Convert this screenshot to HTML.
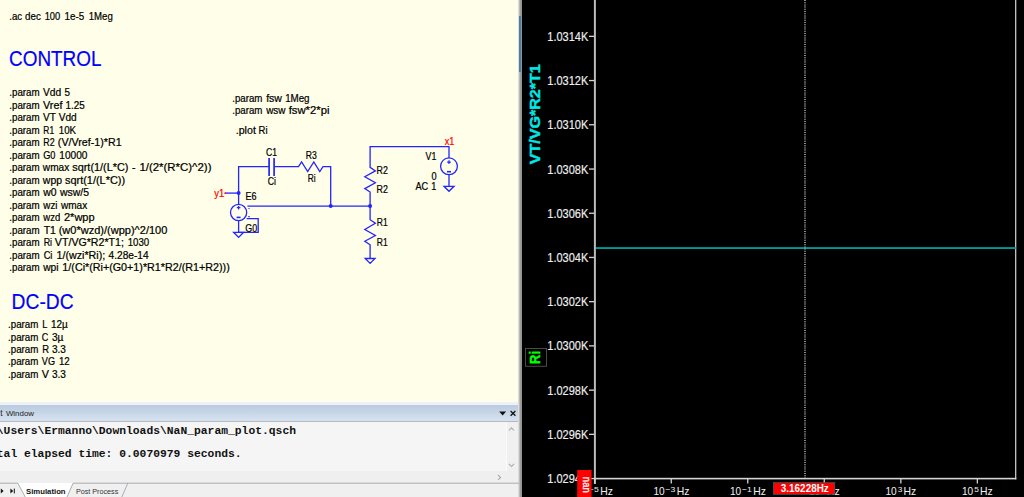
<!DOCTYPE html>
<html><head><meta charset="utf-8"><title>Qspice</title>
<style>
html,body{margin:0;padding:0;}
body{width:1024px;height:497px;overflow:hidden;background:#000;font-family:"Liberation Sans",sans-serif;position:relative;}
.abs{position:absolute;}
#sch{left:0;top:0;width:519px;height:401.7px;background:#ffffe9;}
#band{left:0;top:401.7px;width:519px;height:3.3px;background:#eef1fa;}
#title{left:0;top:405px;width:519px;height:16.8px;background:linear-gradient(#b9cbde,#d6e2f0);border-bottom:1px solid #b5b9c0;box-sizing:border-box;}
#outtxt{left:0;top:421.8px;width:505.5px;height:49px;background:#f5f5f5;border-right:1px solid #fbfbfb;border-bottom:1px solid #fbfbfb;}
#vscroll{left:506.5px;top:421.8px;width:12px;height:49.5px;background:#f0f0f0;}
#hscroll{left:0;top:471.3px;width:519px;height:11.7px;background:#efefef;}
#tabs{left:0;top:483px;width:519px;height:14px;background:#f0f0f0;}
#split{left:517.8px;top:0;width:4.3px;height:497px;background:linear-gradient(90deg,#e4e4dc 0,#d4d4d2 1.3px,#a2a2a2 1.7px,#949494 3.6px,#7a7a7a 4.3px);}
#splitblue{left:519.4px;top:16px;width:2px;height:56px;background:#4b7ca6;}
#plot{left:522.1px;top:0;width:501.9px;height:497px;background:#000;}
svg{position:absolute;left:0;top:0;font-family:"Liberation Sans",sans-serif;}
</style></head>
<body>
<div class="abs" id="sch"></div>
<div class="abs" id="band"></div>
<div class="abs" id="title"></div>
<div class="abs" id="outtxt"></div>
<div class="abs" id="vscroll"></div>
<div class="abs" id="hscroll"></div>
<div class="abs" id="tabs"></div>
<div class="abs" id="split"></div>
<div class="abs" id="splitblue"></div>
<div class="abs" id="plot"></div>
<svg width="1024" height="497" viewBox="0 0 1024 497">
<g id="schematic">
<text x="9" y="66.2" font-size="22.2" fill="#0000ff" textLength="92.5" lengthAdjust="spacingAndGlyphs" stroke="#0000ff" stroke-width="0.22" word-spacing="0.6">CONTROL</text>
<text x="9.25" y="96.1" font-size="10.3" fill="#000" textLength="30.4" lengthAdjust="spacingAndGlyphs" stroke="#000" stroke-width="0.22" word-spacing="0.6">.param</text>
<text x="43.05" y="96.1" font-size="10.3" fill="#000" textLength="18.2" lengthAdjust="spacingAndGlyphs" stroke="#000" stroke-width="0.22" word-spacing="0.6">Vdd</text>
<text x="64.45" y="96.1" font-size="10.3" fill="#000" textLength="5.5" lengthAdjust="spacingAndGlyphs" stroke="#000" stroke-width="0.22" word-spacing="0.6">5</text>
<text x="9.25" y="108.6" font-size="10.3" fill="#000" textLength="30.4" lengthAdjust="spacingAndGlyphs" stroke="#000" stroke-width="0.22" word-spacing="0.6">.param</text>
<text x="43.05" y="108.6" font-size="10.3" fill="#000" textLength="19.4" lengthAdjust="spacingAndGlyphs" stroke="#000" stroke-width="0.22" word-spacing="0.6">Vref</text>
<text x="65.55" y="108.6" font-size="10.3" fill="#000" textLength="19.2" lengthAdjust="spacingAndGlyphs" stroke="#000" stroke-width="0.22" word-spacing="0.6">1.25</text>
<text x="9.25" y="121.1" font-size="10.3" fill="#000" textLength="30.4" lengthAdjust="spacingAndGlyphs" stroke="#000" stroke-width="0.22" word-spacing="0.6">.param</text>
<text x="43.05" y="121.1" font-size="10.3" fill="#000" textLength="12.9" lengthAdjust="spacingAndGlyphs" stroke="#000" stroke-width="0.22" word-spacing="0.6">VT</text>
<text x="58.75" y="121.1" font-size="10.3" fill="#000" textLength="18.0" lengthAdjust="spacingAndGlyphs" stroke="#000" stroke-width="0.22" word-spacing="0.6">Vdd</text>
<text x="9.25" y="133.6" font-size="10.3" fill="#000" textLength="30.4" lengthAdjust="spacingAndGlyphs" stroke="#000" stroke-width="0.22" word-spacing="0.6">.param</text>
<text x="43.35" y="133.6" font-size="10.3" fill="#000" textLength="10.7" lengthAdjust="spacingAndGlyphs" stroke="#000" stroke-width="0.22" word-spacing="0.6">R1</text>
<text x="58.75" y="133.6" font-size="10.3" fill="#000" textLength="17.4" lengthAdjust="spacingAndGlyphs" stroke="#000" stroke-width="0.22" word-spacing="0.6">10K</text>
<text x="9.25" y="146.1" font-size="10.3" fill="#000" textLength="30.4" lengthAdjust="spacingAndGlyphs" stroke="#000" stroke-width="0.22" word-spacing="0.6">.param</text>
<text x="43.35" y="146.1" font-size="10.3" fill="#000" textLength="11.3" lengthAdjust="spacingAndGlyphs" stroke="#000" stroke-width="0.22" word-spacing="0.6">R2</text>
<text x="57.85" y="146.1" font-size="10.3" fill="#000" textLength="63.9" lengthAdjust="spacingAndGlyphs" stroke="#000" stroke-width="0.22" word-spacing="0.6">(V/Vref-1)*R1</text>
<text x="9.25" y="158.6" font-size="10.3" fill="#000" textLength="30.4" lengthAdjust="spacingAndGlyphs" stroke="#000" stroke-width="0.22" word-spacing="0.6">.param</text>
<text x="43.15" y="158.6" font-size="10.3" fill="#000" textLength="12.3" lengthAdjust="spacingAndGlyphs" stroke="#000" stroke-width="0.22" word-spacing="0.6">G0</text>
<text x="59.35" y="158.6" font-size="10.3" fill="#000" textLength="28.1" lengthAdjust="spacingAndGlyphs" stroke="#000" stroke-width="0.22" word-spacing="0.6">10000</text>
<text x="9.25" y="171.1" font-size="10.3" fill="#000" textLength="30.4" lengthAdjust="spacingAndGlyphs" stroke="#000" stroke-width="0.22" word-spacing="0.6">.param</text>
<text x="42.85" y="171.1" font-size="10.3" fill="#000" textLength="26.4" lengthAdjust="spacingAndGlyphs" stroke="#000" stroke-width="0.22" word-spacing="0.6">wmax</text>
<text x="72.25" y="171.1" font-size="10.3" fill="#000" textLength="56.2" lengthAdjust="spacingAndGlyphs" stroke="#000" stroke-width="0.22" word-spacing="0.6">sqrt(1/(L*C)</text>
<text x="132.05" y="171.1" font-size="10.3" fill="#000" textLength="3.5" lengthAdjust="spacingAndGlyphs" stroke="#000" stroke-width="0.22" word-spacing="0.6">-</text>
<text x="139.45" y="171.1" font-size="10.3" fill="#000" textLength="72.0" lengthAdjust="spacingAndGlyphs" stroke="#000" stroke-width="0.22" word-spacing="0.6">1/(2*(R*C)^2))</text>
<text x="9.25" y="183.6" font-size="10.3" fill="#000" textLength="30.4" lengthAdjust="spacingAndGlyphs" stroke="#000" stroke-width="0.22" word-spacing="0.6">.param</text>
<text x="42.85" y="183.6" font-size="10.3" fill="#000" textLength="19.2" lengthAdjust="spacingAndGlyphs" stroke="#000" stroke-width="0.22" word-spacing="0.6">wpp</text>
<text x="64.95" y="183.6" font-size="10.3" fill="#000" textLength="60.2" lengthAdjust="spacingAndGlyphs" stroke="#000" stroke-width="0.22" word-spacing="0.6">sqrt(1/(L*C))</text>
<text x="9.25" y="196.1" font-size="10.3" fill="#000" textLength="30.4" lengthAdjust="spacingAndGlyphs" stroke="#000" stroke-width="0.22" word-spacing="0.6">.param</text>
<text x="43.35" y="196.1" font-size="10.3" fill="#000" textLength="13.3" lengthAdjust="spacingAndGlyphs" stroke="#000" stroke-width="0.22" word-spacing="0.6">w0</text>
<text x="60.05" y="196.1" font-size="10.3" fill="#000" textLength="29.0" lengthAdjust="spacingAndGlyphs" stroke="#000" stroke-width="0.22" word-spacing="0.6">wsw/5</text>
<text x="9.25" y="208.6" font-size="10.3" fill="#000" textLength="30.4" lengthAdjust="spacingAndGlyphs" stroke="#000" stroke-width="0.22" word-spacing="0.6">.param</text>
<text x="43.35" y="208.6" font-size="10.3" fill="#000" textLength="14.1" lengthAdjust="spacingAndGlyphs" stroke="#000" stroke-width="0.22" word-spacing="0.6">wzi</text>
<text x="60.95" y="208.6" font-size="10.3" fill="#000" textLength="26.3" lengthAdjust="spacingAndGlyphs" stroke="#000" stroke-width="0.22" word-spacing="0.6">wmax</text>
<text x="9.25" y="221.1" font-size="10.3" fill="#000" textLength="30.4" lengthAdjust="spacingAndGlyphs" stroke="#000" stroke-width="0.22" word-spacing="0.6">.param</text>
<text x="43.35" y="221.1" font-size="10.3" fill="#000" textLength="16.9" lengthAdjust="spacingAndGlyphs" stroke="#000" stroke-width="0.22" word-spacing="0.6">wzd</text>
<text x="63.95" y="221.1" font-size="10.3" fill="#000" textLength="30.7" lengthAdjust="spacingAndGlyphs" stroke="#000" stroke-width="0.22" word-spacing="0.6">2*wpp</text>
<text x="9.25" y="233.6" font-size="10.3" fill="#000" textLength="30.4" lengthAdjust="spacingAndGlyphs" stroke="#000" stroke-width="0.22" word-spacing="0.6">.param</text>
<text x="43.65" y="233.6" font-size="10.3" fill="#000" textLength="12.3" lengthAdjust="spacingAndGlyphs" stroke="#000" stroke-width="0.22" word-spacing="0.6">T1</text>
<text x="58.65" y="233.6" font-size="10.3" fill="#000" textLength="108.7" lengthAdjust="spacingAndGlyphs" stroke="#000" stroke-width="0.22" word-spacing="0.6">(w0*wzd)/(wpp)^2/100</text>
<text x="9.25" y="246.1" font-size="10.3" fill="#000" textLength="30.4" lengthAdjust="spacingAndGlyphs" stroke="#000" stroke-width="0.22" word-spacing="0.6">.param</text>
<text x="43.65" y="246.1" font-size="10.3" fill="#000" textLength="8.4" lengthAdjust="spacingAndGlyphs" stroke="#000" stroke-width="0.22" word-spacing="0.6">Ri</text>
<text x="54.85" y="246.1" font-size="10.3" fill="#000" textLength="69.1" lengthAdjust="spacingAndGlyphs" stroke="#000" stroke-width="0.22" word-spacing="0.6">VT/VG*R2*T1;</text>
<text x="127.75" y="246.1" font-size="10.3" fill="#000" textLength="21.5" lengthAdjust="spacingAndGlyphs" stroke="#000" stroke-width="0.22" word-spacing="0.6">1030</text>
<text x="9.25" y="258.6" font-size="10.3" fill="#000" textLength="30.4" lengthAdjust="spacingAndGlyphs" stroke="#000" stroke-width="0.22" word-spacing="0.6">.param</text>
<text x="43.65" y="258.6" font-size="10.3" fill="#000" textLength="8.8" lengthAdjust="spacingAndGlyphs" stroke="#000" stroke-width="0.22" word-spacing="0.6">Ci</text>
<text x="56.55" y="258.6" font-size="10.3" fill="#000" textLength="48.7" lengthAdjust="spacingAndGlyphs" stroke="#000" stroke-width="0.22" word-spacing="0.6">1/(wzi*Ri);</text>
<text x="108.55" y="258.6" font-size="10.3" fill="#000" textLength="40.0" lengthAdjust="spacingAndGlyphs" stroke="#000" stroke-width="0.22" word-spacing="0.6">4.28e-14</text>
<text x="9.25" y="271.1" font-size="10.3" fill="#000" textLength="30.4" lengthAdjust="spacingAndGlyphs" stroke="#000" stroke-width="0.22" word-spacing="0.6">.param</text>
<text x="43.15" y="271.1" font-size="10.3" fill="#000" textLength="15.4" lengthAdjust="spacingAndGlyphs" stroke="#000" stroke-width="0.22" word-spacing="0.6">wpi</text>
<text x="62.35" y="271.1" font-size="10.3" fill="#000" textLength="167.4" lengthAdjust="spacingAndGlyphs" stroke="#000" stroke-width="0.22" word-spacing="0.6">1/(Ci*(Ri+(G0+1)*R1*R2/(R1+R2)))</text>
<text x="11.6" y="309.1" font-size="22.2" fill="#0000ff" textLength="62" lengthAdjust="spacingAndGlyphs" stroke="#0000ff" stroke-width="0.22" word-spacing="0.6">DC-DC</text>
<text x="8.0" y="328.1" font-size="10.3" fill="#000" textLength="30.35" lengthAdjust="spacingAndGlyphs" stroke="#000" stroke-width="0.22" word-spacing="0.6">.param</text>
<text x="42.25" y="328.1" font-size="10.3" fill="#000" textLength="5.1" lengthAdjust="spacingAndGlyphs" stroke="#000" stroke-width="0.22" word-spacing="0.6">L</text>
<text x="50.95" y="328.1" font-size="10.3" fill="#000" textLength="16.8" lengthAdjust="spacingAndGlyphs" stroke="#000" stroke-width="0.22" word-spacing="0.6">12µ</text>
<text x="8.0" y="340.5" font-size="10.3" fill="#000" textLength="30.35" lengthAdjust="spacingAndGlyphs" stroke="#000" stroke-width="0.22" word-spacing="0.6">.param</text>
<text x="41.85" y="340.5" font-size="10.3" fill="#000" textLength="6.5" lengthAdjust="spacingAndGlyphs" stroke="#000" stroke-width="0.22" word-spacing="0.6">C</text>
<text x="51.95" y="340.5" font-size="10.3" fill="#000" textLength="11.5" lengthAdjust="spacingAndGlyphs" stroke="#000" stroke-width="0.22" word-spacing="0.6">3µ</text>
<text x="8.0" y="352.9" font-size="10.3" fill="#000" textLength="30.35" lengthAdjust="spacingAndGlyphs" stroke="#000" stroke-width="0.22" word-spacing="0.6">.param</text>
<text x="42.25" y="352.9" font-size="10.3" fill="#000" textLength="6.8" lengthAdjust="spacingAndGlyphs" stroke="#000" stroke-width="0.22" word-spacing="0.6">R</text>
<text x="51.95" y="352.9" font-size="10.3" fill="#000" textLength="14.0" lengthAdjust="spacingAndGlyphs" stroke="#000" stroke-width="0.22" word-spacing="0.6">3.3</text>
<text x="8.0" y="365.3" font-size="10.3" fill="#000" textLength="30.35" lengthAdjust="spacingAndGlyphs" stroke="#000" stroke-width="0.22" word-spacing="0.6">.param</text>
<text x="41.85" y="365.3" font-size="10.3" fill="#000" textLength="13.2" lengthAdjust="spacingAndGlyphs" stroke="#000" stroke-width="0.22" word-spacing="0.6">VG</text>
<text x="58.95" y="365.3" font-size="10.3" fill="#000" textLength="10.8" lengthAdjust="spacingAndGlyphs" stroke="#000" stroke-width="0.22" word-spacing="0.6">12</text>
<text x="8.0" y="377.7" font-size="10.3" fill="#000" textLength="30.35" lengthAdjust="spacingAndGlyphs" stroke="#000" stroke-width="0.22" word-spacing="0.6">.param</text>
<text x="41.85" y="377.7" font-size="10.3" fill="#000" textLength="7.2" lengthAdjust="spacingAndGlyphs" stroke="#000" stroke-width="0.22" word-spacing="0.6">V</text>
<text x="51.95" y="377.7" font-size="10.3" fill="#000" textLength="14.0" lengthAdjust="spacingAndGlyphs" stroke="#000" stroke-width="0.22" word-spacing="0.6">3.3</text>
<text x="232.25" y="101.6" font-size="10.3" fill="#000" textLength="30.2" lengthAdjust="spacingAndGlyphs" stroke="#000" stroke-width="0.22" word-spacing="0.6">.param</text>
<text x="266.15" y="101.6" font-size="10.3" fill="#000" textLength="15.8" lengthAdjust="spacingAndGlyphs" stroke="#000" stroke-width="0.22" word-spacing="0.6">fsw</text>
<text x="285.15" y="101.6" font-size="10.3" fill="#000" textLength="24.4" lengthAdjust="spacingAndGlyphs" stroke="#000" stroke-width="0.22" word-spacing="0.6">1Meg</text>
<text x="232.25" y="114.1" font-size="10.3" fill="#000" textLength="30.2" lengthAdjust="spacingAndGlyphs" stroke="#000" stroke-width="0.22" word-spacing="0.6">.param</text>
<text x="266.15" y="114.1" font-size="10.3" fill="#000" textLength="19.3" lengthAdjust="spacingAndGlyphs" stroke="#000" stroke-width="0.22" word-spacing="0.6">wsw</text>
<text x="288.65" y="114.1" font-size="10.3" fill="#000" textLength="40.8" lengthAdjust="spacingAndGlyphs" stroke="#000" stroke-width="0.22" word-spacing="0.6">fsw*2*pi</text>
<text x="235.75" y="133.6" font-size="10.3" fill="#000" textLength="20.1" lengthAdjust="spacingAndGlyphs" stroke="#000" stroke-width="0.22" word-spacing="0.6">.plot</text>
<text x="258.55" y="133.6" font-size="10.3" fill="#000" textLength="9.0" lengthAdjust="spacingAndGlyphs" stroke="#000" stroke-width="0.22" word-spacing="0.6">Ri</text>
<text x="9.25" y="19.7" font-size="10.3" fill="#000" textLength="12.9" lengthAdjust="spacingAndGlyphs" stroke="#000" stroke-width="0.22" word-spacing="0.6">.ac</text>
<text x="25.05" y="19.7" font-size="10.3" fill="#000" textLength="15.8" lengthAdjust="spacingAndGlyphs" stroke="#000" stroke-width="0.22" word-spacing="0.6">dec</text>
<text x="44.65" y="19.7" font-size="10.3" fill="#000" textLength="15.6" lengthAdjust="spacingAndGlyphs" stroke="#000" stroke-width="0.22" word-spacing="0.6">100</text>
<text x="64.55" y="19.7" font-size="10.3" fill="#000" textLength="19.7" lengthAdjust="spacingAndGlyphs" stroke="#000" stroke-width="0.22" word-spacing="0.6">1e-5</text>
<text x="88.65" y="19.7" font-size="10.3" fill="#000" textLength="24.1" lengthAdjust="spacingAndGlyphs" stroke="#000" stroke-width="0.22" word-spacing="0.6">1Meg</text>
<path d="M238.6 204.4 V166.7 H269.1 M274.1 166.7 H298.5 L301.6 161.9 L307.7 171.5 L313.8 161.9 L319.8 171.5 L323 166.7 H330.7 V206.1" stroke="#2424ff" stroke-width="1.3" fill="none"/>
<path d="M269.1 158.1 V175.9 M274.1 158.1 V175.9" stroke="#2424ff" stroke-width="1.7" fill="none"/>
<path d="M247.4 206.1 H370.1" stroke="#2424ff" stroke-width="1.3" fill="none"/>
<path d="M225.2 193.1 H238.6" stroke="#2424ff" stroke-width="1.3" fill="none"/>
<circle cx="225.2" cy="193.1" r="0.9" fill="#ff0000" stroke="none" stroke-width="0"/>
<circle cx="238.6" cy="193.1" r="2" fill="#2424ff" stroke="none" stroke-width="0"/>
<circle cx="330.7" cy="206.1" r="2" fill="#2424ff" stroke="none" stroke-width="0"/>
<circle cx="370.1" cy="206.1" r="2" fill="#2424ff" stroke="none" stroke-width="0"/>
<circle cx="238.6" cy="212.5" r="8.1" fill="none" stroke="#2424ff" stroke-width="1.3"/>
<path d="M236.79999999999998 207.7 H240.4 M238.6 205.9 V209.5" stroke="#2424ff" stroke-width="1.2" fill="none"/>
<path d="M236.6 217.4 H240.6" stroke="#2424ff" stroke-width="1.6" fill="none"/>
<path d="M248.4 208.5 H249.6 M248.4 216.6 H249.6 M249 216 V217.2" stroke="#2424ff" stroke-width="0.9" fill="none"/>
<path d="M246.6 218.7 H258.2 V232.3 H238.6" stroke="#2424ff" stroke-width="1.3" fill="none"/>
<path d="M238.6 220.6 V232.3 M233.6 232.3 H243.6 L238.6 237.4 Z" stroke="#2424ff" stroke-width="1.3" fill="none"/>
<path d="M449 157.9 V146.6 H370.1 V167.4 L375.4 170.9 L364.8 176.8 L375.4 182.8 L364.8 188.6 L370.1 192 V219.7 L375.4 223.2 L364.8 229.5 L375.4 235.5 L364.8 241.3 L370.1 244.8 V258.5 M365.20000000000005 258.5 H375.0 L370.1 263.4 Z" stroke="#2424ff" stroke-width="1.3" fill="none"/>
<circle cx="449" cy="166.3" r="8.4" fill="none" stroke="#2424ff" stroke-width="1.3"/>
<path d="M447.2 162.1 H450.8 M449 160.3 V163.9" stroke="#2424ff" stroke-width="1.2" fill="none"/>
<path d="M447 171.7 H451" stroke="#2424ff" stroke-width="1.6" fill="none"/>
<path d="M449 174.7 V186.3 M444 186.3 H454 L449 191.3 Z" stroke="#2424ff" stroke-width="1.3" fill="none"/>
<text x="266" y="155.8" font-size="10.2" fill="#000" textLength="11" lengthAdjust="spacingAndGlyphs" stroke="#000" stroke-width="0.22" word-spacing="0.6">C1</text>
<text x="267.7" y="185.3" font-size="10.2" fill="#000" textLength="8.2" lengthAdjust="spacingAndGlyphs" stroke="#000" stroke-width="0.22" word-spacing="0.6">Ci</text>
<text x="305.8" y="158.9" font-size="10.2" fill="#000" textLength="11" lengthAdjust="spacingAndGlyphs" stroke="#000" stroke-width="0.22" word-spacing="0.6">R3</text>
<text x="307.7" y="181.8" font-size="10.2" fill="#000" textLength="7.9" lengthAdjust="spacingAndGlyphs" stroke="#000" stroke-width="0.22" word-spacing="0.6">Ri</text>
<text x="245.5" y="200.1" font-size="10.2" fill="#000" textLength="11" lengthAdjust="spacingAndGlyphs" stroke="#000" stroke-width="0.22" word-spacing="0.6">E6</text>
<text x="245.3" y="232.4" font-size="10.2" fill="#000" textLength="11.8" lengthAdjust="spacingAndGlyphs" stroke="#000" stroke-width="0.22" word-spacing="0.6">G0</text>
<text x="214.2" y="197" font-size="10" fill="#ff0000" textLength="10" lengthAdjust="spacingAndGlyphs" stroke="#ff0000" stroke-width="0.22" word-spacing="0.6">y1</text>
<text x="444.8" y="144.8" font-size="10" fill="#ff0000" textLength="9.6" lengthAdjust="spacingAndGlyphs" stroke="#ff0000" stroke-width="0.22" word-spacing="0.6">x1</text>
<text x="376.6" y="173.8" font-size="10.2" fill="#000" textLength="11.3" lengthAdjust="spacingAndGlyphs" stroke="#000" stroke-width="0.22" word-spacing="0.6">R2</text>
<text x="376.6" y="193.1" font-size="10.2" fill="#000" textLength="11.3" lengthAdjust="spacingAndGlyphs" stroke="#000" stroke-width="0.22" word-spacing="0.6">R2</text>
<text x="376.8" y="226.1" font-size="10.2" fill="#000" textLength="10.9" lengthAdjust="spacingAndGlyphs" stroke="#000" stroke-width="0.22" word-spacing="0.6">R1</text>
<text x="376.8" y="246" font-size="10.2" fill="#000" textLength="10.9" lengthAdjust="spacingAndGlyphs" stroke="#000" stroke-width="0.22" word-spacing="0.6">R1</text>
<text x="425.5" y="160.3" font-size="10.2" fill="#000" textLength="10.8" lengthAdjust="spacingAndGlyphs" stroke="#000" stroke-width="0.22" word-spacing="0.6">V1</text>
<text x="431.4" y="180" font-size="10.2" fill="#000" textLength="5.1" lengthAdjust="spacingAndGlyphs" stroke="#000" stroke-width="0.22" word-spacing="0.6">0</text>
<text x="415.4" y="189.6" font-size="10.2" fill="#000" textLength="20.9" lengthAdjust="spacingAndGlyphs" stroke="#000" stroke-width="0.22" word-spacing="0.6">AC 1</text>
</g>
<g id="plotg">
<rect x="593.9" y="0" width="2" height="484" fill="#bcbcbc"/>
<rect x="594" y="477.8" width="422.3" height="1.6" fill="#d4d4d4"/>
<rect x="1015.1" y="0" width="1.2" height="479.4" fill="#d4d4d4"/>
<rect x="589" y="35.7" width="5" height="1.3" fill="#d4d4d4"/>
<text x="547.3" y="40.8" font-size="12" fill="#f0f0f0" textLength="41" lengthAdjust="spacingAndGlyphs" stroke="#f0f0f0" stroke-width="0.15">1.0314K</text>
<rect x="589" y="79.9" width="5" height="1.3" fill="#d4d4d4"/>
<text x="547.3" y="85.0" font-size="12" fill="#f0f0f0" textLength="41" lengthAdjust="spacingAndGlyphs" stroke="#f0f0f0" stroke-width="0.15">1.0312K</text>
<rect x="589" y="124.1" width="5" height="1.3" fill="#d4d4d4"/>
<text x="547.3" y="129.2" font-size="12" fill="#f0f0f0" textLength="41" lengthAdjust="spacingAndGlyphs" stroke="#f0f0f0" stroke-width="0.15">1.0310K</text>
<rect x="589" y="168.4" width="5" height="1.3" fill="#d4d4d4"/>
<text x="547.3" y="173.5" font-size="12" fill="#f0f0f0" textLength="41" lengthAdjust="spacingAndGlyphs" stroke="#f0f0f0" stroke-width="0.15">1.0308K</text>
<rect x="589" y="212.6" width="5" height="1.3" fill="#d4d4d4"/>
<text x="547.3" y="217.7" font-size="12" fill="#f0f0f0" textLength="41" lengthAdjust="spacingAndGlyphs" stroke="#f0f0f0" stroke-width="0.15">1.0306K</text>
<rect x="589" y="256.8" width="5" height="1.3" fill="#d4d4d4"/>
<text x="547.3" y="261.9" font-size="12" fill="#f0f0f0" textLength="41" lengthAdjust="spacingAndGlyphs" stroke="#f0f0f0" stroke-width="0.15">1.0304K</text>
<rect x="589" y="301.0" width="5" height="1.3" fill="#d4d4d4"/>
<text x="547.3" y="306.1" font-size="12" fill="#f0f0f0" textLength="41" lengthAdjust="spacingAndGlyphs" stroke="#f0f0f0" stroke-width="0.15">1.0302K</text>
<rect x="589" y="345.2" width="5" height="1.3" fill="#d4d4d4"/>
<text x="547.3" y="350.3" font-size="12" fill="#f0f0f0" textLength="41" lengthAdjust="spacingAndGlyphs" stroke="#f0f0f0" stroke-width="0.15">1.0300K</text>
<rect x="589" y="389.5" width="5" height="1.3" fill="#d4d4d4"/>
<text x="547.3" y="394.6" font-size="12" fill="#f0f0f0" textLength="41" lengthAdjust="spacingAndGlyphs" stroke="#f0f0f0" stroke-width="0.15">1.0298K</text>
<rect x="589" y="433.7" width="5" height="1.3" fill="#d4d4d4"/>
<text x="547.3" y="438.8" font-size="12" fill="#f0f0f0" textLength="41" lengthAdjust="spacingAndGlyphs" stroke="#f0f0f0" stroke-width="0.15">1.0296K</text>
<rect x="589" y="477.9" width="5" height="1.3" fill="#d4d4d4"/>
<text x="547.3" y="483.0" font-size="12" fill="#f0f0f0" textLength="41" lengthAdjust="spacingAndGlyphs" stroke="#f0f0f0" stroke-width="0.15">1.0294K</text>
<rect x="594.1" y="478" width="1.3" height="5.5" fill="#d4d4d4"/>
<rect x="670.6" y="478" width="1.3" height="5.5" fill="#d4d4d4"/>
<rect x="747.1" y="478" width="1.3" height="5.5" fill="#d4d4d4"/>
<rect x="823.6" y="478" width="1.3" height="5.5" fill="#d4d4d4"/>
<rect x="900.2" y="478" width="1.3" height="5.5" fill="#d4d4d4"/>
<rect x="976.7" y="478" width="1.3" height="5.5" fill="#d4d4d4"/>
<rect x="596" y="247.2" width="420" height="1.7" fill="#00aaaa"/>
<path d="M805 0 V478" stroke="#b0b0b0" stroke-width="1.6" stroke-dasharray="1 1.2"/>
<text y="495.2" font-size="11.5" fill="#f0f0f0"><tspan x="576.9" textLength="11.2" lengthAdjust="spacingAndGlyphs">10</tspan><tspan x="589.1" y="492.0" font-size="8" textLength="9.8" lengthAdjust="spacingAndGlyphs">−5</tspan><tspan x="600.2" y="495.2" textLength="12.7" lengthAdjust="spacingAndGlyphs">Hz</tspan></text>
<text y="495.2" font-size="11.5" fill="#f0f0f0"><tspan x="653.4" textLength="11.2" lengthAdjust="spacingAndGlyphs">10</tspan><tspan x="665.6" y="492.0" font-size="8" textLength="9.8" lengthAdjust="spacingAndGlyphs">−3</tspan><tspan x="676.7" y="495.2" textLength="12.7" lengthAdjust="spacingAndGlyphs">Hz</tspan></text>
<text y="495.2" font-size="11.5" fill="#f0f0f0"><tspan x="729.9" textLength="11.2" lengthAdjust="spacingAndGlyphs">10</tspan><tspan x="742.1" y="492.0" font-size="8" textLength="9.8" lengthAdjust="spacingAndGlyphs">−1</tspan><tspan x="753.2" y="495.2" textLength="12.7" lengthAdjust="spacingAndGlyphs">Hz</tspan></text>
<text y="495.2" font-size="11.5" fill="#f0f0f0"><tspan x="809.0" textLength="11.2" lengthAdjust="spacingAndGlyphs">10</tspan><tspan x="821.2" y="492.0" font-size="8" textLength="4.6" lengthAdjust="spacingAndGlyphs">1</tspan><tspan x="827.1" y="495.2" textLength="12.7" lengthAdjust="spacingAndGlyphs">Hz</tspan></text>
<text y="495.2" font-size="11.5" fill="#f0f0f0"><tspan x="885.5" textLength="11.2" lengthAdjust="spacingAndGlyphs">10</tspan><tspan x="897.7" y="492.0" font-size="8" textLength="4.6" lengthAdjust="spacingAndGlyphs">3</tspan><tspan x="903.6" y="495.2" textLength="12.7" lengthAdjust="spacingAndGlyphs">Hz</tspan></text>
<text y="495.2" font-size="11.5" fill="#f0f0f0"><tspan x="962.0" textLength="11.2" lengthAdjust="spacingAndGlyphs">10</tspan><tspan x="974.2" y="492.0" font-size="8" textLength="4.6" lengthAdjust="spacingAndGlyphs">5</tspan><tspan x="980.1" y="495.2" textLength="12.7" lengthAdjust="spacingAndGlyphs">Hz</tspan></text>
<rect x="577.2" y="470" width="14.4" height="27" fill="#ff0000"/>
<text transform="translate(583.2,476.8) rotate(90)" font-size="11" fill="#fff" stroke="#fff" stroke-width="0.3" textLength="16" lengthAdjust="spacingAndGlyphs">nan</text>
<rect x="773.3" y="482.6" width="61.5" height="11.8" fill="#ff0000" stroke="#207070" stroke-width="0.6"/>
<text x="780.8" y="492.2" font-size="10" font-weight="bold" fill="#fff" textLength="48" lengthAdjust="spacingAndGlyphs">3.16228Hz</text>
<text transform="translate(540.4,164.2) rotate(-90)" font-size="15.5" font-weight="bold" fill="#00e8e8" stroke="#00e8e8" stroke-width="0.4" textLength="100" lengthAdjust="spacingAndGlyphs">VT/VG*R2*T1</text>
<rect x="525.5" y="348.5" width="21" height="17.8" fill="#000" stroke="#4a4a4a" stroke-width="1"/>
<text transform="translate(540.1,364) rotate(-90)" font-size="15.5" font-weight="bold" fill="#00ff00" stroke="#00ff00" stroke-width="0.4" textLength="13" lengthAdjust="spacingAndGlyphs">Ri</text>
</g>
<g id="bottom">
<text x="-3.2" y="434" font-size="11.3" font-weight="bold" font-family="Liberation Mono" fill="#111" textLength="299.2" lengthAdjust="spacingAndGlyphs">\Users\Ermanno\Downloads\NaN_param_plot.qsch</text>
<text x="-16.8" y="457.1" font-size="11.3" font-weight="bold" font-family="Liberation Mono" fill="#111" textLength="258.4" lengthAdjust="spacingAndGlyphs">Total elapsed time: 0.0070979 seconds.</text>
<text x="0.3" y="415.8" font-size="8.4" fill="#222">t</text>
<text x="5.9" y="415.8" font-size="8" fill="#222" textLength="28.1" lengthAdjust="spacingAndGlyphs">Window</text>
<path d="M499.1 411.5 H506.1 L502.6 415.5 Z" fill="#111"/>
<path d="M510.6 411 L515.4 415.8 M515.4 411 L510.6 415.8" stroke="#111" stroke-width="1.3" fill="none"/>
<path d="M509 430.5 L511.5 427.8 L514 430.5 M509 463.8 L511.5 466.5 L514 463.8 M498 475 L500.6 477.4 L498 479.8" stroke="#aaaaaa" stroke-width="1.1" fill="none"/>
<path d="M0 483 H17.8 L25.3 497 H67 L73.1 483 Z" fill="#fff" stroke="none"/>
<path d="M17.8 483 L25.3 497 H67 L73.1 483 Z" fill="#fff"/>
<path d="M0 483.2 H17.8 L25.5 497.5 M66.8 497.5 L73.1 483.2 H519 M121.6 497.5 L127.8 483.2" stroke="#9a9a9a" stroke-width="0.8" fill="none"/>
<path d="M0.8 488.6 V493.4 L3.6 491 Z M10.4 488.6 V493.4 L13.2 491 Z" fill="#111"/>
<path d="M14.3 488.6 V493.4" stroke="#111" stroke-width="1" fill="none"/>
<text x="26" y="493.8" font-size="8" font-weight="bold" fill="#111" textLength="39.6" lengthAdjust="spacingAndGlyphs">Simulation</text>
<text x="75.9" y="493.8" font-size="8" fill="#333" textLength="42.4" lengthAdjust="spacingAndGlyphs">Post Process</text>
</g>
</svg>
</body></html>
